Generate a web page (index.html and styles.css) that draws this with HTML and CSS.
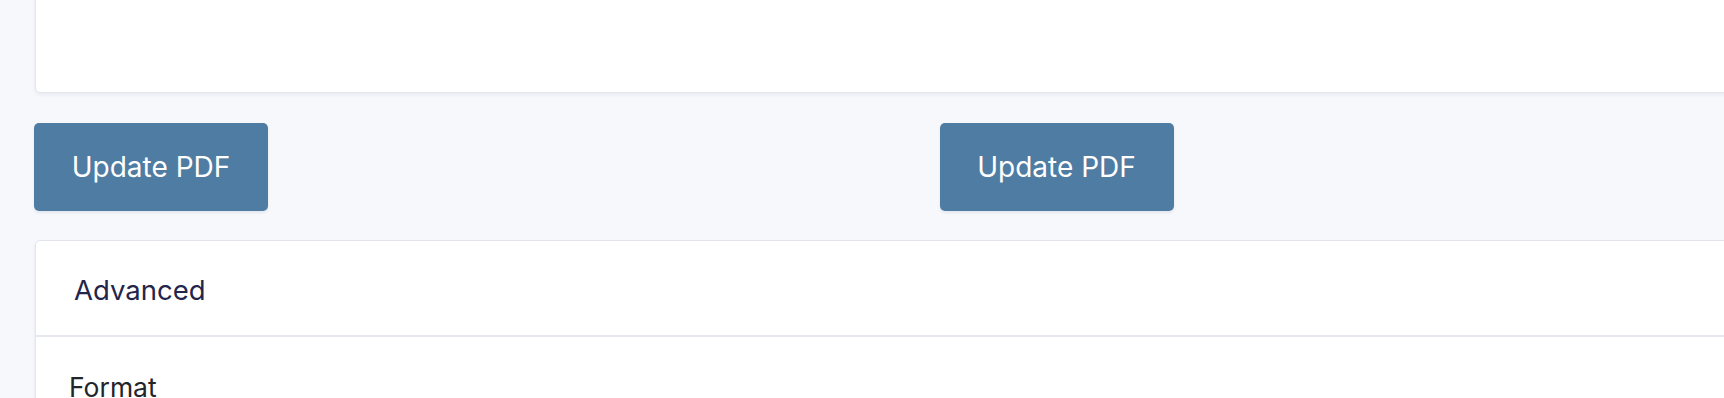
FILE: index.html
```html
<!DOCTYPE html>
<html>
<head>
<meta charset="utf-8">
<link rel="stylesheet" href="styles.css">
</head>
<body>
<div class="page">
  <div class="card card-top"></div>
  <div class="actions">
    <div class="col"><button class="btn">Update PDF</button></div>
    <div class="col"><button class="btn">Update PDF</button></div>
  </div>
  <div class="card card-adv">
    <div class="card-header">Advanced</div>
    <div class="card-body">
      <div class="label">Format</div>
    </div>
  </div>
</div>
</body>
</html>
```
FILE: styles.css
```css
html, body {
  margin: 0;
  padding: 0;
  background: #f7f8fc;
  overflow: hidden;
  font-family: Inter, "Noto Sans", sans-serif;
}
.page {
  width: 1812px;
  padding-left: 35px;
}
.card {
  background: #ffffff;
  border: 1px solid #e3e5ee;
  border-radius: 5px;
  box-shadow: 0 2px 4px rgba(30, 40, 90, 0.06);
}
.card-top {
  margin-top: -20px;
  height: 111px;
}
.actions {
  display: grid;
  grid-template-columns: 1fr 1fr;
  margin-top: 30px;
  margin-left: -1px;
}
.col:last-child {
  margin-left: -1px;
}
.btn {
  font-family: Inter, "Noto Sans", sans-serif;
  font-size: 28px;
  color: #ffffff;
  background: #4f7ca2;
  border: none;
  border-radius: 5px;
  width: 234px;
  height: 88px;
  padding: 0;
  box-shadow: 0 2px 3px rgba(30, 40, 90, 0.08);
  cursor: pointer;
}
.card-adv {
  margin-top: 29px;
  height: 300px;
}
.card-header {
  height: 96px;
  display: flex;
  align-items: center;
  padding: 3px 38px 0;
  font-size: 27.5px;
  color: #23264a;
  border-bottom: 2px solid #e6e8ef;
  box-sizing: border-box;
}
.card-body {
  padding: 34px 33px;
}
.label {
  font-size: 26.5px;
  color: #222529;
}
```
